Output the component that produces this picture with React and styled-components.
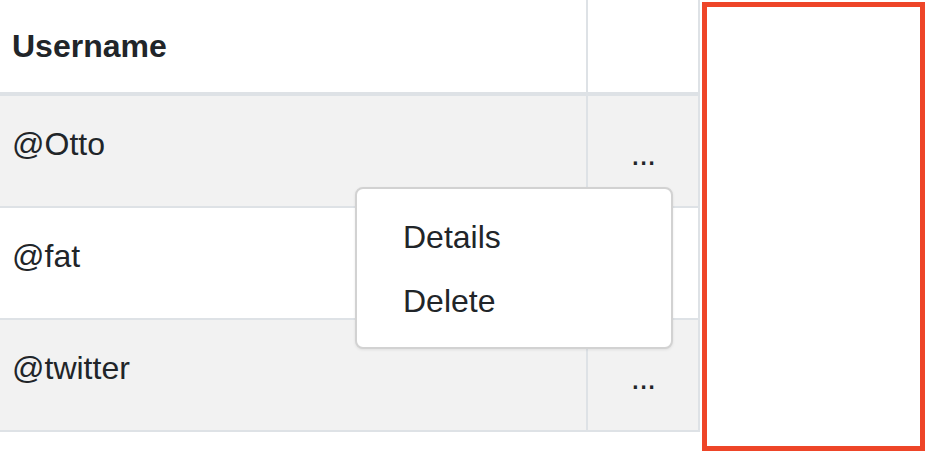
import React from 'react';
import styled, { createGlobalStyle } from 'styled-components';

const GlobalStyle = createGlobalStyle`
  html, body {
    margin: 0;
    padding: 0;
    background: #fff;
  }
  body {
    font-family: "Liberation Sans", Arial, sans-serif;
    color: #212529;
  }
`;

const Page = styled.div`
  display: flex;
  align-items: flex-start;
  width: 928px;
  height: 468px;
  overflow: hidden;
`;

const TableWrap = styled.div`
  position: relative;
  width: 700px;
  flex-shrink: 0;
`;

const Table = styled.table`
  width: 700px;
  border-collapse: separate;
  border-spacing: 0;
  table-layout: fixed;
  font-size: 32px;
  line-height: 48px;
`;

const HeadCell = styled.th`
  box-sizing: border-box;
  height: 96px;
  padding: 22px 12px 0;
  vertical-align: top;
  text-align: left;
  font-weight: 700;
  border-right: 2px solid #dee2e6;
  border-bottom: 4px solid #dee2e6;
  width: ${p => p.$width}px;
`;

const Row = styled.tr`
  background: ${p => (p.$striped ? '#f2f2f2' : '#fff')};
`;

const Cell = styled.td`
  box-sizing: border-box;
  height: 112px;
  padding: 24px 12px 0;
  vertical-align: top;
  text-align: ${p => (p.$center ? 'center' : 'left')};
  border-right: 2px solid #dee2e6;
  border-bottom: 2px solid #dee2e6;
`;

const MoreButton = styled.button`
  display: inline-block;
  height: 66px;
  padding: 10px 4px 8px;
  margin: 0;
  border: none;
  background: transparent;
  color: #212529;
  font-family: "Liberation Sans", Arial, sans-serif;
  font-size: 33px;
  font-weight: 400;
  letter-spacing: -1px;
  line-height: 48px;
  cursor: pointer;
`;

const Menu = styled.div`
  position: absolute;
  left: 355px;
  top: 187px;
  width: 318px;
  box-sizing: border-box;
  padding: 16px 0 14px;
  background: #fff;
  border: 2px solid #d2d2d2;
  border-radius: 8px;
  box-shadow: 0 1px 3px rgba(0, 0, 0, 0.08);
`;

const MenuItem = styled.div`
  padding: 8px 46px;
  font-size: 32px;
  line-height: 48px;
  color: #212529;
`;

const Highlight = styled.div`
  box-sizing: border-box;
  width: 223px;
  height: 449px;
  margin: 2px 0 0 2px;
  border: 5px solid #ee4528;
  flex-shrink: 0;
`;

const users = [
  { name: '@Otto', menu: false },
  { name: '@fat', menu: true },
  { name: '@twitter', menu: false },
];

export default function App() {
  return (
    <>
      <GlobalStyle />
      <Page>
        <TableWrap>
          <Table>
            <thead>
              <tr>
                <HeadCell $width={588}>Username</HeadCell>
                <HeadCell $width={112} />
              </tr>
            </thead>
            <tbody>
              {users.map((u, i) => (
                <Row key={u.name} $striped={i % 2 === 0}>
                  <Cell>{u.name}</Cell>
                  <Cell $center>
                    {!u.menu && <MoreButton>...</MoreButton>}
                  </Cell>
                </Row>
              ))}
            </tbody>
          </Table>
          <Menu>
            <MenuItem>Details</MenuItem>
            <MenuItem>Delete</MenuItem>
          </Menu>
        </TableWrap>
        <Highlight />
      </Page>
    </>
  );
}
